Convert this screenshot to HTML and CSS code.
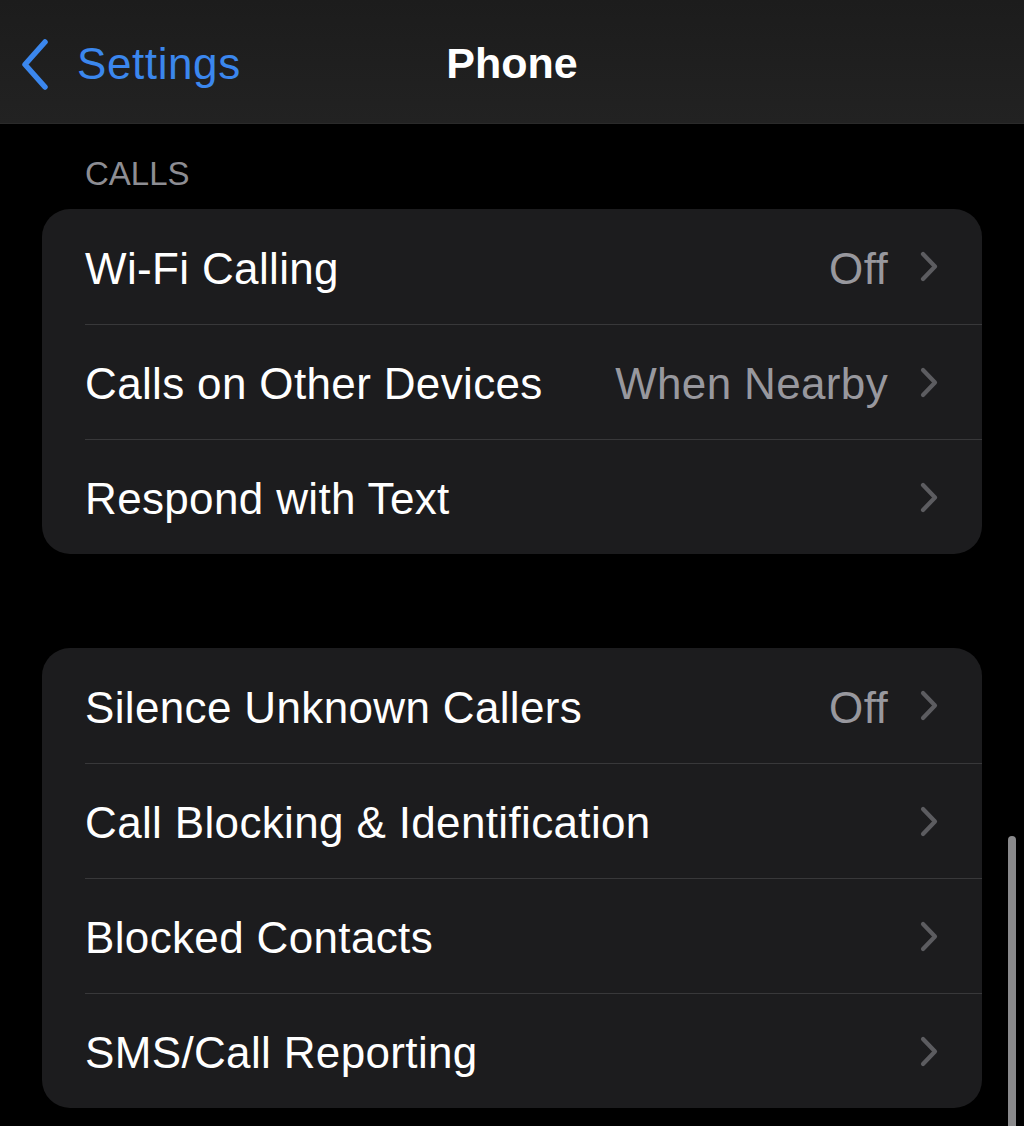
FILE: index.html
```html
<!DOCTYPE html>
<html lang="en">
<head>
    <meta charset="UTF-8">
    <meta name="viewport" content="width=device-width, initial-scale=1.0">
    <title>Phone</title>
    <link rel="stylesheet" href="styles.css">
</head>
<body>
    <header class="navbar">
        <a class="back" href="#">
            <svg class="back-icon" width="28" height="52" viewBox="0 0 28 52">
                <polyline points="24,3 4,25.5 24,48" fill="none" stroke="#3b87ee" stroke-width="5.5" stroke-linecap="round" stroke-linejoin="round"/>
            </svg>
            <span>Settings</span>
        </a>
        <h1 class="title">Phone</h1>
    </header>

    <main class="content">
        <h2 class="section-title">CALLS</h2>
        <div class="group">
            <div class="row">
                <div class="row-inner">
                    <span class="label">Wi-Fi Calling</span>
                    <span class="value">Off</span>
                    <svg class="chevron" width="18" height="31" viewBox="0 0 18 31"><polyline points="3,3 15,15.5 3,28" fill="none" stroke="#5c5c60" stroke-width="4.2" stroke-linecap="round" stroke-linejoin="round"/></svg>
                </div>
            </div>
            <div class="row">
                <div class="row-inner">
                    <span class="label">Calls on Other Devices</span>
                    <span class="value">When Nearby</span>
                    <svg class="chevron" width="18" height="31" viewBox="0 0 18 31"><polyline points="3,3 15,15.5 3,28" fill="none" stroke="#5c5c60" stroke-width="4.2" stroke-linecap="round" stroke-linejoin="round"/></svg>
                </div>
            </div>
            <div class="row">
                <div class="row-inner">
                    <span class="label">Respond with Text</span>
                    <svg class="chevron" width="18" height="31" viewBox="0 0 18 31"><polyline points="3,3 15,15.5 3,28" fill="none" stroke="#5c5c60" stroke-width="4.2" stroke-linecap="round" stroke-linejoin="round"/></svg>
                </div>
            </div>
        </div>

        <div class="group group-spaced">
            <div class="row">
                <div class="row-inner">
                    <span class="label">Silence Unknown Callers</span>
                    <span class="value">Off</span>
                    <svg class="chevron" width="18" height="31" viewBox="0 0 18 31"><polyline points="3,3 15,15.5 3,28" fill="none" stroke="#5c5c60" stroke-width="4.2" stroke-linecap="round" stroke-linejoin="round"/></svg>
                </div>
            </div>
            <div class="row">
                <div class="row-inner">
                    <span class="label">Call Blocking &amp; Identification</span>
                    <svg class="chevron" width="18" height="31" viewBox="0 0 18 31"><polyline points="3,3 15,15.5 3,28" fill="none" stroke="#5c5c60" stroke-width="4.2" stroke-linecap="round" stroke-linejoin="round"/></svg>
                </div>
            </div>
            <div class="row">
                <div class="row-inner">
                    <span class="label">Blocked Contacts</span>
                    <svg class="chevron" width="18" height="31" viewBox="0 0 18 31"><polyline points="3,3 15,15.5 3,28" fill="none" stroke="#5c5c60" stroke-width="4.2" stroke-linecap="round" stroke-linejoin="round"/></svg>
                </div>
            </div>
            <div class="row">
                <div class="row-inner">
                    <span class="label">SMS/Call Reporting</span>
                    <svg class="chevron" width="18" height="31" viewBox="0 0 18 31"><polyline points="3,3 15,15.5 3,28" fill="none" stroke="#5c5c60" stroke-width="4.2" stroke-linecap="round" stroke-linejoin="round"/></svg>
                </div>
            </div>
        </div>
    </main>

    <div class="scroll-indicator"></div>
</body>
</html>
```

FILE: styles.css
```css
* {
    margin: 0;
    padding: 0;
    box-sizing: border-box;
}

html, body {
    height: 100%;
}

body {
    font-family: 'Liberation Sans', Arial, sans-serif;
    background: #000;
    color: #fff;
    overflow: hidden;
    position: relative;
}

.navbar {
    height: 124px;
    background: linear-gradient(#1c1c1c, #222222);
    border-bottom: 1px solid #2a2a2a;
    display: flex;
    align-items: center;
    position: relative;
    padding-left: 21px;
}

.back {
    display: flex;
    align-items: center;
    gap: 28px;
    color: #3b87ee;
    text-decoration: none;
    font-size: 44px;
    letter-spacing: 0.6px;
    padding-top: 4px;
}

.back-icon {
    margin-top: 2px;
}

.title {
    position: absolute;
    left: 0;
    right: 0;
    top: 0;
    bottom: 0;
    display: flex;
    align-items: center;
    justify-content: center;
    font-size: 43px;
    font-weight: 700;
    pointer-events: none;
    padding-top: 4px;
}

.content {
    padding: 0 42px;
}

.section-title {
    font-size: 33px;
    font-weight: 400;
    color: #8d8d93;
    padding: 31px 0 0 43px;
    height: 85px;
}

.group {
    background: #1c1c1e;
    border-radius: 28px;
    overflow: hidden;
}

.group-spaced {
    margin-top: 94px;
}

.row {
    padding-left: 43px;
}

.row-inner {
    height: 115px;
    display: flex;
    align-items: center;
    padding-right: 44px;
}

.row + .row .row-inner {
    border-top: 1px solid #38383a;
}

.label {
    flex: 1;
    font-size: 44px;
    letter-spacing: 0.35px;
    color: #fff;
    padding-top: 4px;
}

.value {
    font-size: 44px;
    letter-spacing: 0.35px;
    color: #98989e;
    margin-right: 32px;
    padding-top: 4px;
}

.chevron {
    flex-shrink: 0;
}

.scroll-indicator {
    position: absolute;
    right: 8px;
    top: 836px;
    width: 8px;
    height: 300px;
    background: #8a8a8c;
    border-radius: 4px;
}
```
